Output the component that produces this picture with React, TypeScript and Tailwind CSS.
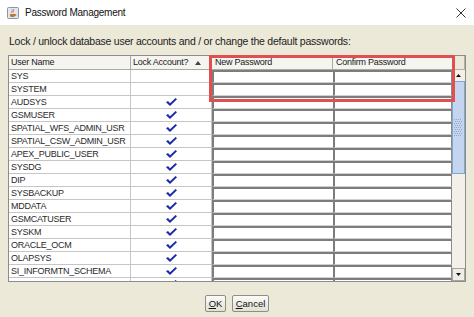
import React from "react";

const rows: [string, boolean][] = [
  ["SYS", false],
  ["SYSTEM", false],
  ["AUDSYS", true],
  ["GSMUSER", true],
  ["SPATIAL_WFS_ADMIN_USR", true],
  ["SPATIAL_CSW_ADMIN_USR", true],
  ["APEX_PUBLIC_USER", true],
  ["SYSDG", true],
  ["DIP", true],
  ["SYSBACKUP", true],
  ["MDDATA", true],
  ["GSMCATUSER", true],
  ["SYSKM", true],
  ["ORACLE_OCM", true],
  ["OLAPSYS", true],
  ["SI_INFORMTN_SCHEMA", true],
  ["DVSYS", true],
];

function AppIcon() {
  return (
    <svg width="12" height="12" viewBox="0 0 12 12">
      <rect x="0.5" y="0.5" width="11" height="11" rx="1" fill="#dfe7f1" stroke="#8497ad" />
      <path d="M3 7h5v1.5a1.5 1.5 0 0 1-1.5 1.5h-2A1.5 1.5 0 0 1 3 8.5z" fill="#c0782f" />
      <path d="M8 7.5h1v1h-1" fill="none" stroke="#c0782f" strokeWidth="0.8" />
      <path d="M5 2.5c1 1-1 2 0 3.5M6.5 2c1 1-1 2 0 3.5" fill="none" stroke="#d9572a" strokeWidth="0.8" />
    </svg>
  );
}

function Check() {
  return (
    <svg width="11" height="8" viewBox="0 0 11 8">
      <polygon points="0,4.2 2,3 4,5.2 9.6,0 11,1.2 4,8" fill="#1b2aa6" />
    </svg>
  );
}

function Grip() {
  const dots = [];
  for (let r = 0; r < 9; r++)
    for (let c = 0; c < 4; c++)
      dots.push(<rect key={`${r}-${c}`} x={c * 2 + (r % 2)} y={r * 2} width="1" height="1" fill="#8fa6cf" />);
  return (
    <svg width="9" height="18" viewBox="0 0 9 18">
      {dots}
    </svg>
  );
}

export default function App() {
  return (
    <div className="relative w-[474px] h-[317px] overflow-hidden bg-[#ece9d8] font-['Liberation_Sans',Arial,sans-serif] text-[#222]">
      {/* title bar */}
      <div className="h-[25px] bg-white flex items-center pl-[7px] pr-[7px]">
        <AppIcon />
        <span className="ml-[6px] text-[10px] tracking-[-0.25px] text-[#111]">Password Management</span>
        <svg className="ml-auto mr-[1px]" width="10" height="10" viewBox="0 0 10 10">
          <path d="M0.5 0.5l9 9M9.5 0.5l-9 9" stroke="#333" strokeWidth="1" />
        </svg>
      </div>

      <div className="h-[30px] pl-[9px] pt-[10px] text-[10.5px] leading-[12px] tracking-[-0.24px]">
        Lock / unlock database user accounts and / or change the default passwords:
      </div>

      {/* table */}
      <div className="ml-[8px] mr-[8px] h-[227px] border border-[#8c8c8c] flex text-[9px] tracking-[-0.25px] bg-[#ece9d8]">
        <div className="flex-1 flex flex-col overflow-hidden">
          <div className="grid grid-cols-[122px_81px_121px_119px] h-[14px] shrink-0 bg-[#f5f4ef] leading-[13px] text-[#1a1a1a]">
            <div className="border-r border-b border-[#a9a9a9] pl-[2px]">User Name</div>
            <div className="border-r border-b border-[#a9a9a9] pl-[2px] flex items-center">
              <span>Lock Account?</span>
              <svg className="ml-auto mr-[10px]" width="6" height="4" viewBox="0 0 6 4">
                <polygon points="0,4 3,0 6,4" fill="#444" />
              </svg>
            </div>
            <div className="border-r border-b border-[#a9a9a9] pl-[3px]">New Password</div>
            <div className="border-b border-[#a9a9a9] pl-[3px]">Confirm Password</div>
          </div>
          {rows.map(([name, locked]) => (
            <div key={name} className="grid grid-cols-[122px_81px_121px_119px] h-[13px] shrink-0">
              <div className="bg-white border-r border-b border-[#c6c6c6] pl-[2px] leading-[12px] whitespace-nowrap overflow-hidden text-[#2a2a2a]">
                {name}
              </div>
              <div className="bg-white border-r border-b border-[#c6c6c6] flex items-center justify-center">
                {locked && <Check />}
              </div>
              <div className="bg-white border-t-2 border-l-2 border-b border-t-[#7d7d7d] border-l-[#7d7d7d] border-b-[#cfcfcf]" />
              <div className="bg-white border-t-2 border-l-2 border-b border-r border-t-[#7d7d7d] border-l-[#7d7d7d] border-b-[#cfcfcf] border-r-[#8a8a8a]" />
            </div>
          ))}
        </div>

        {/* scrollbar */}
        <div className="w-[13px] shrink-0 flex flex-col bg-[#f2f0e8]">
          <div className="h-[14px] shrink-0 border-l border-r border-b border-[#b3b1a6] bg-[#ece9d8]" />
          <div className="h-[11px] shrink-0 flex items-center justify-center">
            <svg width="5" height="3" viewBox="0 0 5 3">
              <polygon points="0,3 2.5,0 5,3" fill="#111" />
            </svg>
          </div>
          <div className="h-[93px] shrink-0 bg-[#c4d5ef] border border-[#86a2d0] flex items-center justify-center">
            <Grip />
          </div>
          <div className="flex-1" />
          <div className="h-[13px] shrink-0 border border-[#a9a79c] bg-[#efede5] flex items-center justify-center">
            <svg width="5" height="3" viewBox="0 0 5 3">
              <polygon points="0,0 5,0 2.5,3" fill="#111" />
            </svg>
          </div>
        </div>
      </div>

      {/* buttons */}
      <div className="flex justify-center gap-[6px] mt-[13px] text-[9.5px]">
        <button className="w-[21px] h-[17px] border border-[#8e8e86] rounded-[2px] bg-gradient-to-b from-[#fbfbf8] to-[#e2e0d6] text-[#111] leading-none">
          <span className="underline">O</span>K
        </button>
        <button className="w-[37px] h-[17px] border border-[#8e8e86] rounded-[2px] bg-gradient-to-b from-[#fbfbf8] to-[#e2e0d6] text-[#111] leading-none">
          <span className="underline">C</span>ancel
        </button>
      </div>

      {/* red highlight annotation */}
      <div className="absolute left-[209px] top-[55px] w-[246px] h-[47px] border-[3px] border-[#e05050] pointer-events-none" />
    </div>
  );
}
